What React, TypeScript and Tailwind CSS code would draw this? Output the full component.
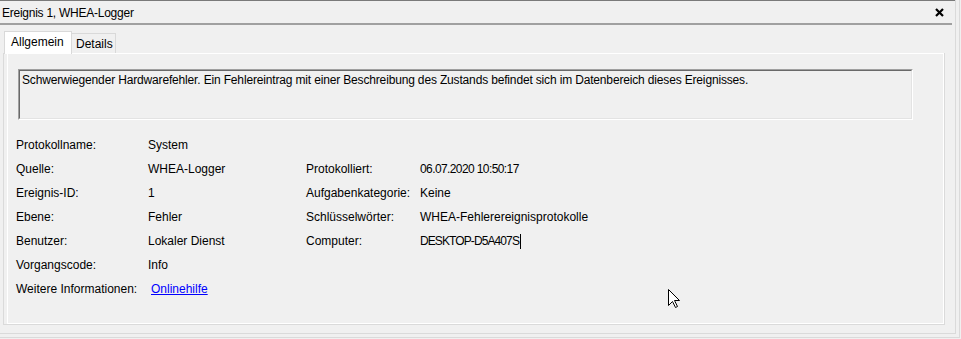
import React from "react";

type Row = [string, React.ReactNode, string?, React.ReactNode?];

const rows: Row[] = [
  ["Protokollname:", "System"],
  [
    "Quelle:",
    "WHEA-Logger",
    "Protokolliert:",
    <span className="tracking-[-0.6px]">06.07.2020 10:50:17</span>,
  ],
  ["Ereignis-ID:", "1", "Aufgabenkategorie:", "Keine"],
  ["Ebene:", "Fehler", "Schlüsselwörter:", "WHEA-Fehlerereignisprotokolle"],
  [
    "Benutzer:",
    "Lokaler Dienst",
    "Computer:",
    <>
      <span className="tracking-[-0.9px]">DESKTOP-D5A407S</span>
      <span className="inline-block w-[1px] h-[15px] bg-black ml-[1px]" />
    </>,
  ],
  ["Vorgangscode:", "Info"],
  [
    "Weitere Informationen:",
    <span className="ml-[3px] text-[#0000ff] underline">Onlinehilfe</span>,
  ],
];

export default function App() {
  return (
    <div
      className="relative w-[961px] h-[339px] overflow-hidden bg-[#f0f0f0] text-[12px] text-black"
      style={{ fontFamily: '"Liberation Sans", Arial, sans-serif' }}
    >
      <div className="w-[960px] h-[338px] border-r border-b border-[#dadada]">
        <div className="w-[956px] h-[334px] border-r border-b border-[#dadada]">
          {/* header */}
          <div className="w-[955px] h-[23px] border-t border-[#7a7a7a] flex items-center justify-between pl-[2px] pr-[11px]">
            <span className="leading-none mt-[1px] tracking-[-0.25px]">Ereignis 1, WHEA-Logger</span>
            <svg width="9" height="9" viewBox="0 0 9 9">
              <path d="M1 1 L8 8 M8 1 L1 8" stroke="#000" strokeWidth="2.2" />
            </svg>
          </div>
          <div className="w-[952px] h-[2px] bg-[#a0a0a0]" />

          {/* tabs */}
          <div className="pt-[6px]">
            <div className="flex items-end pl-[4px] h-[22px]">
              <div className="relative z-10 w-[68px] h-[23px] -mb-[1px] border border-b-0 border-[#d9d9d9] bg-white pl-[6px] pt-[3px] leading-[14px]">
                Allgemein
              </div>
              <div className="w-[44px] h-[20px] border border-l-0 border-b-0 border-[#d9d9d9] bg-[#f0f0f0] pl-[4px] pt-[3px] leading-[14px]">
                Details
              </div>
            </div>
            <div className="ml-[3px] w-[942px] h-[272px] border-l border-r border-b border-[#dadada]">
              <div className="ml-[3px] w-[937px] h-[271px] border border-white">
                {/* description */}
                <div className="ml-[10px] mt-[15px] w-[895px] h-[51px] border-t border-l border-[#a0a0a0] border-r border-b border-r-white border-b-white">
                  <div className="w-full h-full border-t border-l border-[#696969] border-r border-b border-r-[#e3e3e3] border-b-[#e3e3e3] pl-[2px] pt-[1px] leading-[16px] tracking-[-0.16px]">
                    Schwerwiegender Hardwarefehler. Ein Fehlereintrag mit einer Beschreibung des Zustands befindet sich im Datenbereich dieses Ereignisses.
                  </div>
                </div>

                {/* fields */}
                <div className="mt-[13px] pl-[8px] grid grid-cols-[132px_158px_114px_1fr] auto-rows-[24px] items-center">
                  {rows.map((r, i) => (
                    <React.Fragment key={i}>
                      <div className="leading-[16px]">{r[0]}</div>
                      <div className="leading-[16px]">{r[1]}</div>
                      <div className="leading-[16px]">{r[2] ?? ""}</div>
                      <div className="leading-[16px] flex items-center">{r[3] ?? ""}</div>
                    </React.Fragment>
                  ))}
                </div>
              </div>
            </div>
          </div>
        </div>
      </div>

      {/* mouse cursor */}
      <svg
        className="absolute left-[668px] top-[289px]"
        width="13"
        height="20"
        viewBox="0 0 13 20"
      >
        <path
          d="M0.5 0.5 L0.5 16.5 L4.5 12.5 L7.5 18.5 L9.5 17.5 L6.5 11.5 L11.5 11.5 Z"
          fill="#fff"
          stroke="#000"
          strokeWidth="1"
          strokeLinejoin="miter"
        />
      </svg>
    </div>
  );
}
